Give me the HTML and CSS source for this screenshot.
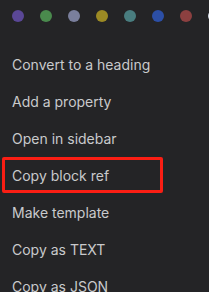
FILE: index.html
```html
<!DOCTYPE html>
<html>
<head>
<meta charset="utf-8">
<link rel="stylesheet" href="styles.css">
</head>
<body>
<div class="menu">
  <div class="colors">
    <span class="dot purple"></span>
    <span class="dot green"></span>
    <span class="dot gray"></span>
    <span class="dot yellow"></span>
    <span class="dot teal"></span>
    <span class="dot blue"></span>
    <span class="dot red"></span>
    <span class="dot clear"></span>
  </div>
  <ul class="items">
    <li class="item">Convert to a heading</li>
    <li class="item">Add a property</li>
    <li class="item">Open in sidebar</li>
    <li class="item highlighted">Copy block ref</li>
    <li class="item">Make template</li>
    <li class="item">Copy as TEXT</li>
    <li class="item">Copy as JSON</li>
  </ul>
</div>
</body>
</html>
```
FILE: styles.css
```css
html, body {
  margin: 0;
  padding: 0;
  background: #242426;
  overflow: hidden;
}
.menu {
  width: 209px;
  height: 292px;
  overflow: hidden;
  font-family: Inter, "Noto Sans", sans-serif;
  font-size: 14px;
  color: #c9cacc;
}
.colors {
  display: flex;
  gap: 16px;
  padding: 10px 0 0 12px;
  height: 37px;
  box-sizing: border-box;
  white-space: nowrap;
}
.dot {
  flex: none;
  width: 12px;
  height: 12px;
  border-radius: 50%;
}
.purple { background: #5a4796; }
.green { background: #4a8a4d; }
.gray { background: #7a7f9c; }
.yellow { background: #9c8a24; }
.teal { background: #497d7f; }
.blue { background: #2c4fa6; }
.red { background: #8c4040; }
.clear {
  box-sizing: border-box;
  border: 1.5px solid #d6dce8;
  background: transparent;
}
.items {
  list-style: none;
  margin: 9px 0 0 0;
  padding: 0;
}
.item {
  height: 37px;
  display: flex;
  align-items: center;
  padding-left: 12px;
  box-sizing: border-box;
  white-space: nowrap;
}
.item.highlighted {
  margin-left: 2px;
  width: 161px;
  height: 36px;
  margin-bottom: 1px;
  padding-left: 7px;
  border: 3px solid #fa1e14;
  border-radius: 2px;
}
```
